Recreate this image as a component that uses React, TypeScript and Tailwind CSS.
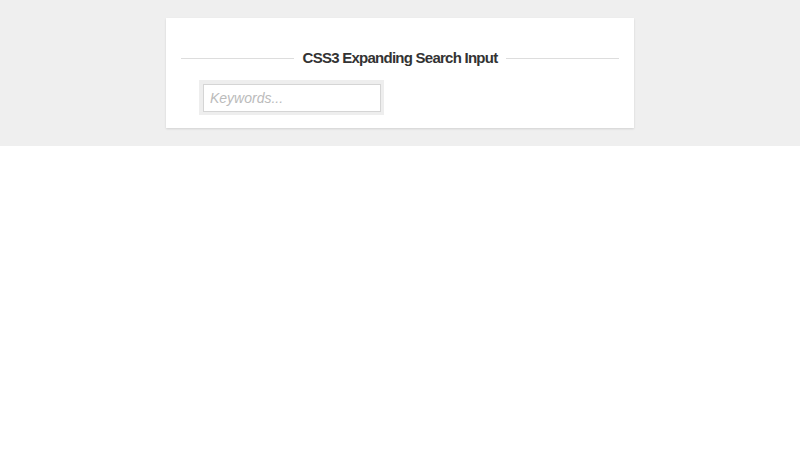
export default function App() {
  return (
    <div className="min-h-[450px] bg-white" style={{ fontFamily: '"Liberation Sans", Arial, sans-serif' }}>
      <div className="bg-[#efefef] py-[18px]">
        <div className="mx-auto h-[110px] w-[468px] bg-white px-[15px] pt-[30px] shadow-[0_1px_2px_rgba(0,0,0,0.12)]">
          {/* title with rules */}
          <div className="flex h-[20px] items-center gap-[9px]">
            <div className="h-px flex-1 bg-[#dddddd]" />
            <h1 className="text-[15px] font-bold tracking-[-0.75px] text-[#333333]">CSS3 Expanding Search Input</h1>
            <div className="h-px flex-1 bg-[#dddddd]" />
          </div>
          {/* search */}
          <div className="ml-[18px] mt-[12px] w-[185px] bg-[#eeeeee] pl-[4px] pt-[4px] pb-[3px]">
            <input
              placeholder="Keywords..."
              className="block h-[28px] w-[178px] border border-[#d5d5d5] bg-white px-[6px] text-[14px] italic text-[#555] outline-none placeholder:text-[#bbbbbb]"
            />
          </div>
        </div>
      </div>
    </div>
  );
}
